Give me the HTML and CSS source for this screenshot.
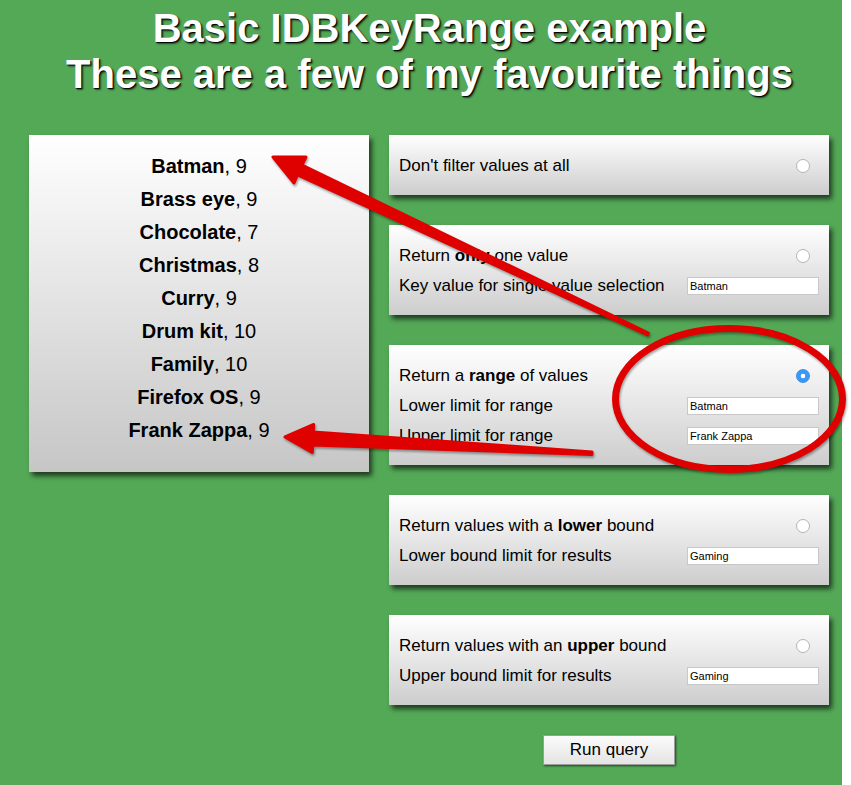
FILE: index.html
```html
<!DOCTYPE html>
<html lang="en">
<head>
<meta charset="utf-8">
<title>Basic IDBKeyRange example</title>
<link rel="stylesheet" href="styles.css">
</head>
<body>
<div class="page">
  <h1 class="title">Basic IDBKeyRange example<br>These are a few of my favourite things</h1>
  <div class="main">
    <ul class="things">
      <li><strong>Batman</strong>, 9</li>
      <li><strong>Brass eye</strong>, 9</li>
      <li><strong>Chocolate</strong>, 7</li>
      <li><strong>Christmas</strong>, 8</li>
      <li><strong>Curry</strong>, 9</li>
      <li><strong>Drum kit</strong>, 10</li>
      <li><strong>Family</strong>, 10</li>
      <li><strong>Firefox OS</strong>, 9</li>
      <li><strong>Frank Zappa</strong>, 9</li>
    </ul>
    <form class="controls">
      <div class="panel">
        <div class="row"><label for="none">Don't filter values at all</label><input class="radio" type="radio" name="value" id="none"></div>
      </div>
      <div class="panel">
        <div class="row"><label for="only">Return <strong>only</strong> one value</label><input class="radio" type="radio" name="value" id="only"></div>
        <div class="row"><label for="onlytext">Key value for single value selection</label><input class="field" type="text" id="onlytext" value="Batman"></div>
      </div>
      <div class="panel">
        <div class="row"><label for="range">Return a <strong>range</strong> of values</label><input class="radio" type="radio" name="value" id="range" checked></div>
        <div class="row"><label for="rangelower">Lower limit for range</label><input class="field" type="text" id="rangelower" value="Batman"></div>
        <div class="row"><label for="rangeupper">Upper limit for range</label><input class="field" type="text" id="rangeupper" value="Frank Zappa"></div>
      </div>
      <div class="panel">
        <div class="row"><label for="lower">Return values with a <strong>lower</strong> bound</label><input class="radio" type="radio" name="value" id="lower"></div>
        <div class="row"><label for="lowerbound">Lower bound limit for results</label><input class="field" type="text" id="lowerbound" value="Gaming"></div>
      </div>
      <div class="panel">
        <div class="row"><label for="upper">Return values with an <strong>upper</strong> bound</label><input class="radio" type="radio" name="value" id="upper"></div>
        <div class="row"><label for="upperbound">Upper bound limit for results</label><input class="field" type="text" id="upperbound" value="Gaming"></div>
      </div>
      <button class="run" type="button">Run query</button>
    </form>
  </div>
  <svg class="annotations" width="851" height="785" viewBox="0 0 851 785" aria-hidden="true">
    <g class="marks">
      <polygon points="273,157 306,157 302,165 648.4,333.1 647.6,334.9 297.5,175 294,183"/>
      <polygon points="285,437 313.7,424.5 313.3,432 592.05,452 591.95,454.5 312.7,445 312.3,452.5"/>
      <ellipse cx="729" cy="399" rx="113.5" ry="70.5"/>
    </g>
  </svg>
</div>
</body>
</html>
```

FILE: styles.css
```css
html {
  background: #ffffff;
}

body {
  margin: 0;
  font-family: "Liberation Sans", Arial, Helvetica, sans-serif;
  color: #000;
}

.page {
  position: relative;
  width: 842px;
  min-height: 785px;
  background: #54a957;
}

.title {
  margin: 0;
  padding: 5px 0 0 17px;
  font-size: 40px;
  line-height: 46px;
  font-weight: bold;
  text-align: center;
  color: #fff;
  text-shadow: 1px 1px 1px #000, 2px 2px 2px rgba(0, 0, 0, 0.5);
}

.main {
  display: flex;
  align-items: flex-start;
  gap: 20px;
  margin-top: 38px;
  padding-left: 29px;
}

.things {
  list-style: none;
  margin: 0;
  padding: 15px 0 25px;
  width: 340px;
  text-align: center;
  font-size: 20px;
  line-height: 33px;
  background: linear-gradient(#ffffff, #c6c6c6);
  box-shadow: 3px 4px 5px rgba(0, 0, 0, 0.65);
}

.controls {
  display: flex;
  flex-direction: column;
  gap: 30px;
  width: 440px;
  margin: 0;
}

.panel {
  padding: 15px 10px;
  background: linear-gradient(#ffffff, #cdcdcd);
  box-shadow: 3px 4px 5px rgba(0, 0, 0, 0.65);
}

.row {
  display: flex;
  align-items: center;
  justify-content: space-between;
  height: 30px;
  font-size: 17px;
  padding-top: 1px;
  box-sizing: border-box;
}

.radio {
  appearance: none;
  -webkit-appearance: none;
  margin: 0 9px 0 0;
  width: 14px;
  height: 14px;
  border: 1px solid #b4b4b4;
  border-radius: 50%;
  background: #fff;
  box-sizing: border-box;
}

.radio:checked {
  border-color: #3a8ee8;
  background: radial-gradient(circle, #fff 0 2px, #3d97f7 2.6px);
}

.field {
  width: 132px;
  height: 18px;
  box-sizing: border-box;
  margin: 0;
  padding: 0 2px;
  border: 1px solid #c8c8c8;
  background: #fff;
  font-family: "Liberation Sans", Arial, sans-serif;
  font-size: 11px;
  color: #000;
}

.run {
  align-self: center;
  width: 132px;
  height: 30px;
  margin: 0;
  padding: 0;
  border: 1px solid #9c9c9c;
  border-radius: 0;
  background: linear-gradient(#fbfbfb, #e4e4e4);
  box-shadow: 1px 1px 2px rgba(0, 0, 0, 0.6);
  font-family: "Liberation Sans", Arial, sans-serif;
  font-size: 17px;
  color: #000;
}

.annotations {
  position: absolute;
  left: 0;
  top: 0;
  pointer-events: none;
}

.marks {
  filter: drop-shadow(1px 2px 1px rgba(0, 0, 0, 0.35));
}

.marks polygon {
  fill: #df0000;
  stroke: #df0000;
  stroke-width: 3;
  stroke-linejoin: round;
}

.marks ellipse {
  fill: none;
  stroke: #df0000;
  stroke-width: 7;
}
```
